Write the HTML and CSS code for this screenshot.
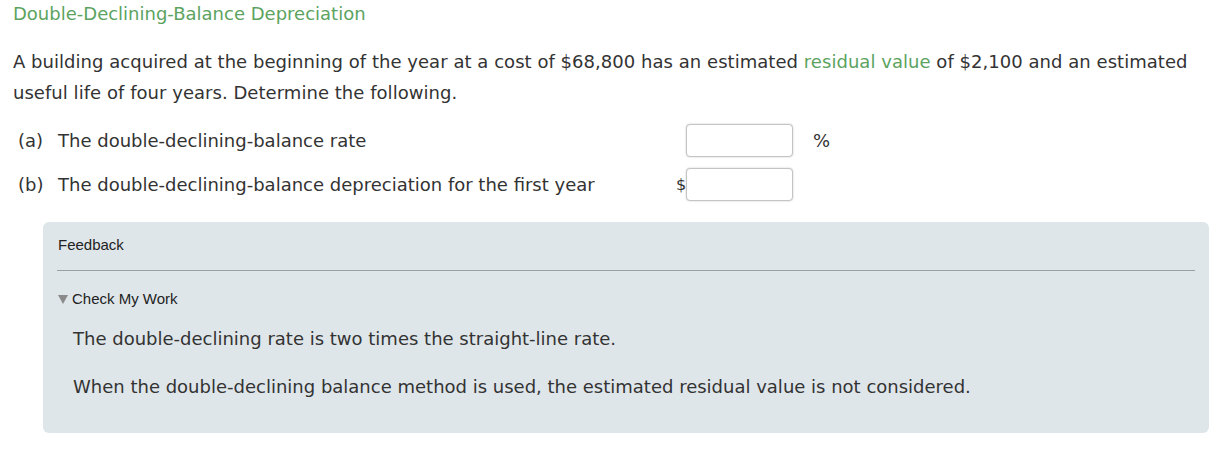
FILE: index.html
```html
<!DOCTYPE html>
<html>
<head>
<meta charset="utf-8">
<link rel="stylesheet" href="styles.css">
</head>
<body>
<div class="page">
  <h1 class="title">Double-Declining-Balance Depreciation</h1>
  <p class="intro">A building acquired at the beginning of the year at a cost of $68,800 has an estimated <span class="term">residual value</span> of $2,100 and an estimated useful life of four years. Determine the following.</p>
  <div class="rows">
    <div class="row">
      <span class="tag">(a)</span>
      <span class="label">The double-declining-balance rate</span>
      <span class="pre"></span>
      <span class="box"></span>
      <span class="post">%</span>
    </div>
    <div class="row">
      <span class="tag">(b)</span>
      <span class="label">The double-declining-balance depreciation for the first year</span>
      <span class="pre">$</span>
      <span class="box"></span>
      <span class="post"></span>
    </div>
  </div>
  <div class="feedback">
    <div class="fb-head">Feedback</div>
    <div class="fb-rule"></div>
    <div class="fb-toggle"><span class="tri"></span>Check My Work</div>
    <div class="fb-body">
      <p>The double-declining rate is two times the straight-line rate.</p>
      <p>When the double-declining balance method is used, the estimated residual value is not considered.</p>
    </div>
  </div>
</div>
</body>
</html>
```

FILE: styles.css
```css
html, body { margin: 0; padding: 0; background: #fff; }
.page {
  font-family: "DejaVu Sans", Verdana, sans-serif;
  color: #333;
  font-size: 18px;
  padding: 0 0 0 13px;
  width: 1200px;
}
.title {
  margin: 0;
  padding-top: 3px;
  font-size: 18px;
  font-weight: normal;
  color: #5ca35f;
  line-height: 22px;
}
.intro {
  margin: 21px 0 0 0;
  line-height: 31px;
  letter-spacing: 0.04px;
}
.term { color: #5ca35f; }
.rows { margin-top: 10px; }
.row {
  display: flex;
  align-items: center;
  height: 44px;
}
.tag { width: 45px; padding-left: 5px; box-sizing: border-box; }
.label { width: 618px; }
.pre { width: 10px; text-align: right; font-size: 16px; }
.box {
  width: 107px;
  height: 33px;
  border: 1px solid #c4c4c4;
  border-radius: 4px;
  box-shadow: 0 0 2px rgba(0,0,0,0.22);
  background: #fff;
  box-sizing: border-box;
}
.post { margin-left: 20px; }
.feedback {
  margin: 16px 0 0 30px;
  width: 1166px;
  height: 211px;
  background: #dfe6ea;
  border-radius: 6px;
  box-sizing: border-box;
  padding: 14px 14px 0 14px;
  font-family: "Liberation Sans", Arial, sans-serif;
  font-size: 15px;
  color: #222;
}
.fb-head { line-height: 18px; padding-left: 1px; }
.fb-rule { height: 1px; background: #999fa3; margin-top: 16px; }
.fb-toggle { margin-top: 19px; line-height: 18px; display: flex; align-items: center; }
.tri {
  width: 0; height: 0;
  border-left: 5px solid transparent;
  border-right: 5px solid transparent;
  border-top: 9px solid #8a8a8a;
  margin-right: 4px;
  margin-left: 1px;
}
.fb-body {
  font-family: "DejaVu Sans", Verdana, sans-serif;
  font-size: 18px;
  color: #333;
  padding-left: 16px;
}
.fb-body p { margin: 0; line-height: 22px; }
.fb-body p:first-child { margin-top: 20px; }
.fb-body p + p { margin-top: 26px; }
```
